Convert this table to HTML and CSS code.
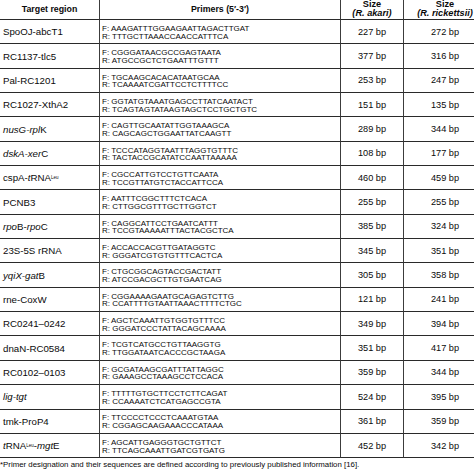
FILE: index.html
```html
<!DOCTYPE html>
<html>
<head>
<meta charset="utf-8">
<link rel="stylesheet" href="styles.css">
</head>
<body>
<div class="page">
  <div class="tbl">
    <div class="c h">Target region</div>
    <div class="c h">Primers (5′-3′)</div>
    <div class="c h sz"><span>Size</span><span><i>(R. akari)</i></span></div>
    <div class="c h sz last"><span>Size</span><span><i>(R. rickettsii)</i></span></div>

    <div class="c t">SpoOJ-abcT1</div>
    <div class="c p"><span>F: AAAGATTTGGAAGAATTAGACTTGAT</span><span>R: TTTGCTTAAACCAACCATTTCA</span></div>
    <div class="c s">227 bp</div><div class="c s last">272 bp</div>

    <div class="c t">RC1137-tlc5</div>
    <div class="c p"><span>F: CGGGATAACGCCGAGTAATA</span><span>R: ATGCCGCTCTGAATTTGTTT</span></div>
    <div class="c s">377 bp</div><div class="c s last">316 bp</div>

    <div class="c t">Pal-RC1201</div>
    <div class="c p"><span>F: TGCAAGCACACATAATGCAA</span><span>R: TCAAAATCGATTCCTCTTTTCC</span></div>
    <div class="c s">253 bp</div><div class="c s last">247 bp</div>

    <div class="c t">RC1027-XthA2</div>
    <div class="c p"><span>F: GGTATGTAAATGAGCCTTATCAATACT</span><span>R: TCAGTAGTATAAGTAGCTCCTGCTGTC</span></div>
    <div class="c s">151 bp</div><div class="c s last">135 bp</div>

    <div class="c t"><i>nusG-rpl</i>K</div>
    <div class="c p"><span>F: CAGTTGCAATATTGGTAAAGCA</span><span>R: CAGCAGCTGGAATTATCAAGTT</span></div>
    <div class="c s">289 bp</div><div class="c s last">344 bp</div>

    <div class="c t"><i>dskA-xer</i>C</div>
    <div class="c p"><span>F: TCCCATAGGTAATTTAGGTGTTTC</span><span>R: TACTACCGCATATCCAATTAAAAA</span></div>
    <div class="c s">108 bp</div><div class="c s last">177 bp</div>

    <div class="c t">cspA-<i>t</i>RNA<sup>Leu</sup></div>
    <div class="c p"><span>F: CGCCATTGTCCTGTTCAATA</span><span>R: TCCGTTATGTCTACCATTCCA</span></div>
    <div class="c s">460 bp</div><div class="c s last">459 bp</div>

    <div class="c t">PCNB3</div>
    <div class="c p"><span>F: AATTTCGGCTTTCTCACA</span><span>R: CTTGGCGTTTGCTTGGTCT</span></div>
    <div class="c s">255 bp</div><div class="c s last">255 bp</div>

    <div class="c t"><i>rpo</i>B-<i>rpo</i>C</div>
    <div class="c p"><span>F: CAGGCATTCCTGAATCATTT</span><span>R: TCCGTAAAAATTTACTACGCTCA</span></div>
    <div class="c s">385 bp</div><div class="c s last">324 bp</div>

    <div class="c t">23S-5S rRNA</div>
    <div class="c p"><span>F: ACCACCACGTTGATAGGTC</span><span>R: GGGATCGTGTGTTTCACTCA</span></div>
    <div class="c s">345 bp</div><div class="c s last">351 bp</div>

    <div class="c t"><i>yqiX-gat</i>B</div>
    <div class="c p"><span>F: CTGCGGCAGTACCGACTATT</span><span>R: ATCCGACGCTTGTGAATCAG</span></div>
    <div class="c s">305 bp</div><div class="c s last">358 bp</div>

    <div class="c t">rne-CoxW</div>
    <div class="c p"><span>F: CGGAAAAGAATGCAGAGTCTTG</span><span>R: CCATTTTGTAATTAAACTTTTCTGC</span></div>
    <div class="c s">121 bp</div><div class="c s last">241 bp</div>

    <div class="c t">RC0241–0242</div>
    <div class="c p"><span>F: AGCTCAAATTGTGGTGTTTCC</span><span>R: GGGATCCCTATTACAGCAAAA</span></div>
    <div class="c s">349 bp</div><div class="c s last">394 bp</div>

    <div class="c t">dnaN-RC0584</div>
    <div class="c p"><span>F: TCGTCATGCCTGTTAAGGTG</span><span>R: TTGGATAATCACCCGCTAAGA</span></div>
    <div class="c s">351 bp</div><div class="c s last">417 bp</div>

    <div class="c t">RC0102–0103</div>
    <div class="c p"><span>F: GCGATAAGCGATTTATTAGGC</span><span>R: GAAAGCCTAAAGCCTCCACA</span></div>
    <div class="c s">359 bp</div><div class="c s last">344 bp</div>

    <div class="c t"><i>lig-tgt</i></div>
    <div class="c p"><span>F: TTTTTGTGCTTCCTCTTCAGAT</span><span>R: CCAAAATCTCATGAGCCGTA</span></div>
    <div class="c s">524 bp</div><div class="c s last">395 bp</div>

    <div class="c t">tmk-ProP4</div>
    <div class="c p"><span>F: TTCCCCTCCCTCAAATGTAA</span><span>R: CGGAGCAAGAAACCCATAAA</span></div>
    <div class="c s">361 bp</div><div class="c s last">359 bp</div>

    <div class="c t"><i>t</i>RNA<sup>Leu</sup>-<i>mgt</i>E</div>
    <div class="c p"><span>F: AGCATTGAGGGTGCTGTTCT</span><span>R: TTCAGCAAATTGATCGTGATG</span></div>
    <div class="c s">452 bp</div><div class="c s last">342 bp</div>
  </div>
  <p class="note">*Primer designation and their sequences are defined according to previously published information [16].</p>
</div>
</body>
</html>
```

FILE: styles.css
```css
html, body {
  margin: 0;
  padding: 0;
  background: #fff;
}
body {
  width: 474px;
  height: 472px;
  overflow: hidden;
  font-family: "Liberation Sans", Arial, sans-serif;
  color: #0a0a0a;
}
.page {
  width: 490px;
}
.tbl {
  display: grid;
  grid-template-columns: 100px 241px 63px 82px;
  grid-template-rows: 20px repeat(18, 24.35px);
}
.c {
  box-sizing: border-box;
  border-right: 1px solid #3c3c3c;
  border-bottom: 1px solid #2a2a2a;
  display: flex;
  align-items: center;
  white-space: nowrap;
  overflow: hidden;
}
.c.last {
  border-right: none;
}
.h {
  font-weight: bold;
  font-size: 8.8px;
  justify-content: center;
  padding-bottom: 1px;
}
.h.sz {
  flex-direction: column;
  justify-content: flex-start;
  font-size: 9.2px;
  line-height: 9px;
  padding: 0;
}
.t {
  font-size: 9.7px;
  padding-left: 3px;
}
.t sup {
  font-size: 4.5px;
  vertical-align: 3px;
  line-height: 0;
}
.p {
  flex-direction: column;
  align-items: flex-start;
  justify-content: center;
  font-size: 8px;
  line-height: 7.8px;
  padding-left: 2px;
  padding-top: 2px;
}
.s {
  font-size: 9.2px;
  justify-content: center;
}
.note {
  margin: 3px 0 0 0;
  font-size: 7.85px;
  line-height: 8px;
  white-space: nowrap;
}
```
